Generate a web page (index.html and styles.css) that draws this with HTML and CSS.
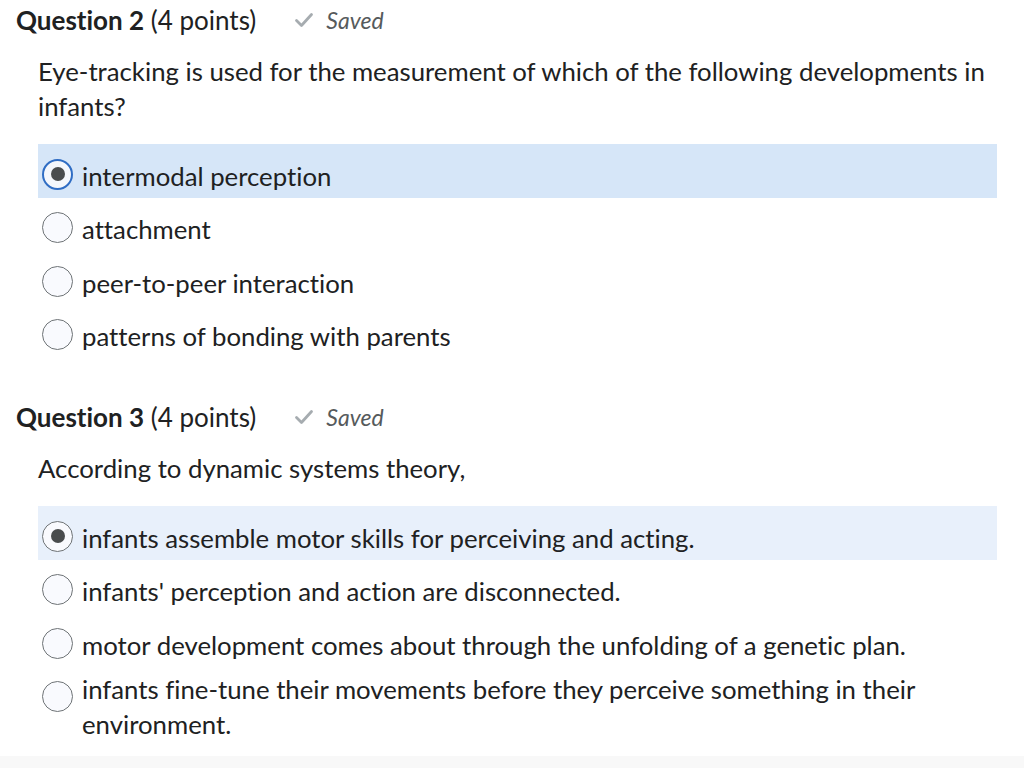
FILE: index.html
```html
<!DOCTYPE html>
<html>
<head>
<meta charset="utf-8">
<link rel="stylesheet" href="styles.css">
</head>
<body>
<div class="page">
  <section class="question">
    <div class="q-header">
      <h2 class="q-title"><strong>Question 2</strong> (4 points)</h2>
      <span class="saved">
        <svg class="check" viewBox="0 0 20 16" width="20" height="16"><polyline points="2.5,8.5 7.5,13.5 17.5,2.5" fill="none" stroke="#a6acb0" stroke-width="2.8" stroke-linecap="round" stroke-linejoin="round"/></svg>
        <em>Saved</em>
      </span>
    </div>
    <p class="q-text">Eye-tracking is used for the measurement of which of the following developments in infants?</p>
    <ul class="options">
      <li class="option selected focus"><span class="radio checked focus"></span><span class="opt-text">intermodal perception</span></li>
      <li class="option"><span class="radio"></span><span class="opt-text">attachment</span></li>
      <li class="option"><span class="radio"></span><span class="opt-text">peer-to-peer interaction</span></li>
      <li class="option"><span class="radio"></span><span class="opt-text">patterns of bonding with parents</span></li>
    </ul>
  </section>
  <section class="question q3">
    <div class="q-header">
      <h2 class="q-title"><strong>Question 3</strong> (4 points)</h2>
      <span class="saved">
        <svg class="check" viewBox="0 0 20 16" width="20" height="16"><polyline points="2.5,8.5 7.5,13.5 17.5,2.5" fill="none" stroke="#a6acb0" stroke-width="2.8" stroke-linecap="round" stroke-linejoin="round"/></svg>
        <em>Saved</em>
      </span>
    </div>
    <p class="q-text">According to dynamic systems theory,</p>
    <ul class="options">
      <li class="option selected"><span class="radio checked"></span><span class="opt-text">infants assemble motor skills for perceiving and acting.</span></li>
      <li class="option"><span class="radio"></span><span class="opt-text">infants' perception and action are disconnected.</span></li>
      <li class="option"><span class="radio"></span><span class="opt-text">motor development comes about through the unfolding of a genetic plan.</span></li>
      <li class="option"><span class="radio"></span><span class="opt-text">infants fine-tune their movements before they perceive something in their environment.</span></li>
    </ul>
  </section>
  <div class="next-band"></div>
</div>
</body>
</html>
```
FILE: styles.css
```css
html, body {
  margin: 0;
  padding: 0;
  background: #ffffff;
}
body {
  font-family: Lato, "Open Sans", sans-serif;
  font-variant-ligatures: none;
  color: #202122;
  width: 1024px;
  height: 768px;
  overflow: hidden;
}
.page {
  display: flex;
  flex-direction: column;
}
.question {
  padding: 0 27px 0 16px;
}
.q3 {
  margin-top: 39px;
}
.q-header {
  display: flex;
  align-items: center;
  height: 40px;
}
.q-title {
  margin: 0;
  font-size: 26px;
  font-weight: 400;
  line-height: 30px;
  color: #202122;
}
.q-title strong {
  font-weight: 700;
}
.saved {
  display: inline-flex;
  align-items: center;
  margin-left: 38px;
  color: #565a5c;
  font-size: 23px;
}
.saved em {
  font-style: italic;
  margin-left: 12px;
}
.check {
  display: block;
}
.q-text {
  margin: 13.5px 0 0 22px;
  font-size: 25.75px;
  line-height: 35px;
  color: #202122;
}
.options {
  list-style: none;
  margin: 20.5px 0 0 22px;
  padding: 0;
}
.option {
  display: flex;
  align-items: flex-start;
  min-height: 53.5px;
  padding-left: 4px;
}
.option.selected {
  background: #e8f0fb;
}
.option.selected.focus {
  background: #d6e6f8;
}
.radio {
  flex: 0 0 auto;
  box-sizing: border-box;
  width: 31px;
  height: 31px;
  margin-top: 14.5px;
  border: 1.5px solid #6e7376;
  border-radius: 50%;
  background: #f9fafe;
  display: flex;
  align-items: center;
  justify-content: center;
}
.radio.checked::after {
  content: "";
  width: 14px;
  height: 14px;
  border-radius: 50%;
  background: #494c4e;
}
.radio.focus {
  border: 2.5px solid #2f6dc4;
  background: #f4f7fc;
}
.opt-text {
  align-self: center;
  margin: 0 0 -5.5px 9px;
  padding-top: 5.5px;
  font-size: 25.75px;
  line-height: 35px;
  color: #202122;
}
.next-band {
  margin-top: 19.5px;
  height: 20px;
  background: #f8f8f8;
}
```
